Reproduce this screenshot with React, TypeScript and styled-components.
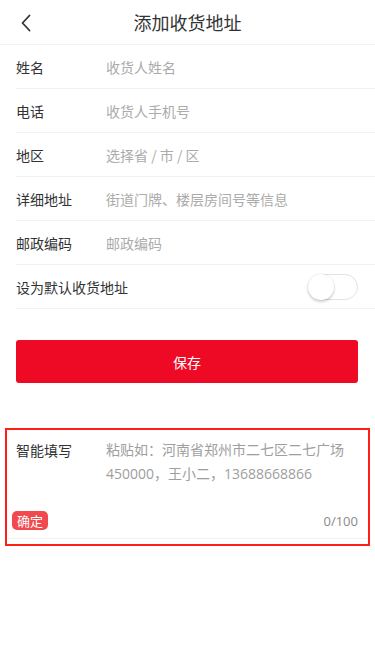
import React, { useState } from "react";
import styled, { createGlobalStyle } from "styled-components";

const GlobalStyle = createGlobalStyle`
  html, body {
    margin: 0;
    padding: 0;
    background: #fff;
    font-family: "Noto Sans CJK SC", "Noto Sans", sans-serif;
    color: #323233;
  }
  * { box-sizing: border-box; }
`;

const Page = styled.div`
  width: 375px;
  min-height: 667px;
  background: #fff;
`;

const NavBar = styled.header`
  height: 45px;
  display: flex;
  align-items: center;
  justify-content: center;
  position: relative;
  border-bottom: 1px solid #f2f2f2;
`;

const BackButton = styled.button`
  position: absolute;
  left: 14px;
  top: 10px;
  width: 24px;
  height: 26px;
  padding: 0;
  border: 0;
  background: none;
  display: flex;
  align-items: center;
  justify-content: center;
`;

const Title = styled.h1`
  margin: 0;
  font-size: 18px;
  font-weight: 400;
  color: #333;
  line-height: 24px;
`;

const Cell = styled.label`
  height: 44px;
  display: flex;
  align-items: center;
  padding-left: 16px;
  padding-right: 17px;
  position: relative;
  &::after {
    content: "";
    position: absolute;
    left: 16px;
    right: 0;
    bottom: 0;
    border-bottom: 1px solid #f2f2f2;
  }
`;

const Label = styled.span<{ $wide?: boolean }>`
  width: ${(p) => (p.$wide ? "auto" : "90px")};
  flex: ${(p) => (p.$wide ? "1" : "none")};
  font-size: 14px;
  line-height: 24px;
  color: #323233;
`;

const Input = styled.input`
  flex: 1;
  min-width: 0;
  border: 0;
  outline: none;
  padding: 0;
  font: inherit;
  font-size: 14px;
  line-height: 24px;
  color: #323233;
  background: transparent;
  &::placeholder {
    color: #ababab;
  }
`;

const Switch = styled.button<{ $on: boolean }>`
  position: relative;
  width: 50px;
  height: 26px;
  padding: 0;
  border: 1px solid #e3e3e3;
  border-radius: 13px;
  background: ${(p) => (p.$on ? "#ee0a24" : "#fff")};
  cursor: pointer;
  &::after {
    content: "";
    position: absolute;
    top: -1px;
    left: ${(p) => (p.$on ? "24px" : "-1px")};
    width: 26px;
    height: 26px;
    border-radius: 50%;
    background: #fff;
    box-shadow: 0 2px 3px rgba(0, 0, 0, 0.18), 0 0 0 1px rgba(0, 0, 0, 0.04);
  }
`;

const SaveButton = styled.button`
  display: block;
  width: 342px;
  height: 43px;
  margin: 31px 0 0 16px;
  border: 0;
  border-radius: 3px;
  background: #ee0a24;
  color: #fff;
  font: inherit;
  font-size: 14px;
`;

const SmartSection = styled.section`
  margin-top: 45px;
  border-top: 1px solid #f5f5f5;
`;

const SmartBox = styled.div`
  margin: -1px 5px 0;
  height: 118px;
  border: 2px solid #ff1f14;
  padding-bottom: 5px;
`;

const SmartInner = styled.div`
  padding-top: 8px;
  border-bottom: 1px solid #f2f2f2;
`;

const SmartRow = styled.div`
  display: flex;
  height: 72px;
  padding-left: 9px;
  padding-right: 10px;
`;

const TextArea = styled.textarea`
  flex: 1;
  height: 56px;
  border: 0;
  outline: none;
  resize: none;
  padding: 0;
  font-family: "Open Sans", "Noto Sans CJK SC", sans-serif;
  font-size: 14px;
  line-height: 24px;
  color: #323233;
  background: transparent;
  &::placeholder {
    color: #9e9e9e;
  }
`;

const SmartFooter = styled.div`
  display: flex;
  align-items: flex-end;
  justify-content: space-between;
  height: 28px;
  padding: 0 10px 8px 5px;
`;

const ConfirmTag = styled.button`
  height: 19px;
  padding: 0 5px;
  border: 0;
  border-radius: 5px;
  background: #f2494e;
  color: #fff;
  font: inherit;
  font-size: 13px;
  line-height: 19px;
`;

const Counter = styled.span`
  font-family: "Open Sans", "Noto Sans CJK SC", sans-serif;
  font-size: 13px;
  line-height: 18px;
  color: #8a8a8a;
`;

const fields = [
  { label: "姓名", placeholder: "收货人姓名" },
  { label: "电话", placeholder: "收货人手机号" },
  { label: "地区", placeholder: "选择省 / 市 / 区" },
  { label: "详细地址", placeholder: "街道门牌、楼层房间号等信息" },
  { label: "邮政编码", placeholder: "邮政编码" },
];

export default function App() {
  const [isDefault, setIsDefault] = useState(false);
  const [text, setText] = useState("");

  return (
    <Page>
      <GlobalStyle />
      <NavBar>
        <BackButton aria-label="返回">
          <svg width="12" height="18" viewBox="0 0 12 18">
            <polyline
              points="9.5,1.5 2.5,9 9.5,16.5"
              fill="none"
              stroke="#333"
              strokeWidth="1.8"
              strokeLinecap="round"
              strokeLinejoin="round"
            />
          </svg>
        </BackButton>
        <Title>添加收货地址</Title>
      </NavBar>

      {fields.map((f) => (
        <Cell key={f.label}>
          <Label>{f.label}</Label>
          <Input placeholder={f.placeholder} />
        </Cell>
      ))}
      <Cell as="div">
        <Label $wide>设为默认收货地址</Label>
        <Switch
          $on={isDefault}
          aria-label="设为默认收货地址"
          onClick={() => setIsDefault(!isDefault)}
        />
      </Cell>

      <SaveButton>保存</SaveButton>

      <SmartSection>
        <SmartBox>
          <SmartInner>
            <SmartRow>
              <Label>智能填写</Label>
              <TextArea
                value={text}
                maxLength={100}
                onChange={(e) => setText(e.target.value)}
                placeholder={"粘贴如：河南省郑州市二七区二七广场\n450000，王小二，13688668866"}
              />
            </SmartRow>
            <SmartFooter>
              <ConfirmTag>确定</ConfirmTag>
              <Counter>{text.length}/100</Counter>
            </SmartFooter>
          </SmartInner>
        </SmartBox>
      </SmartSection>
    </Page>
  );
}
